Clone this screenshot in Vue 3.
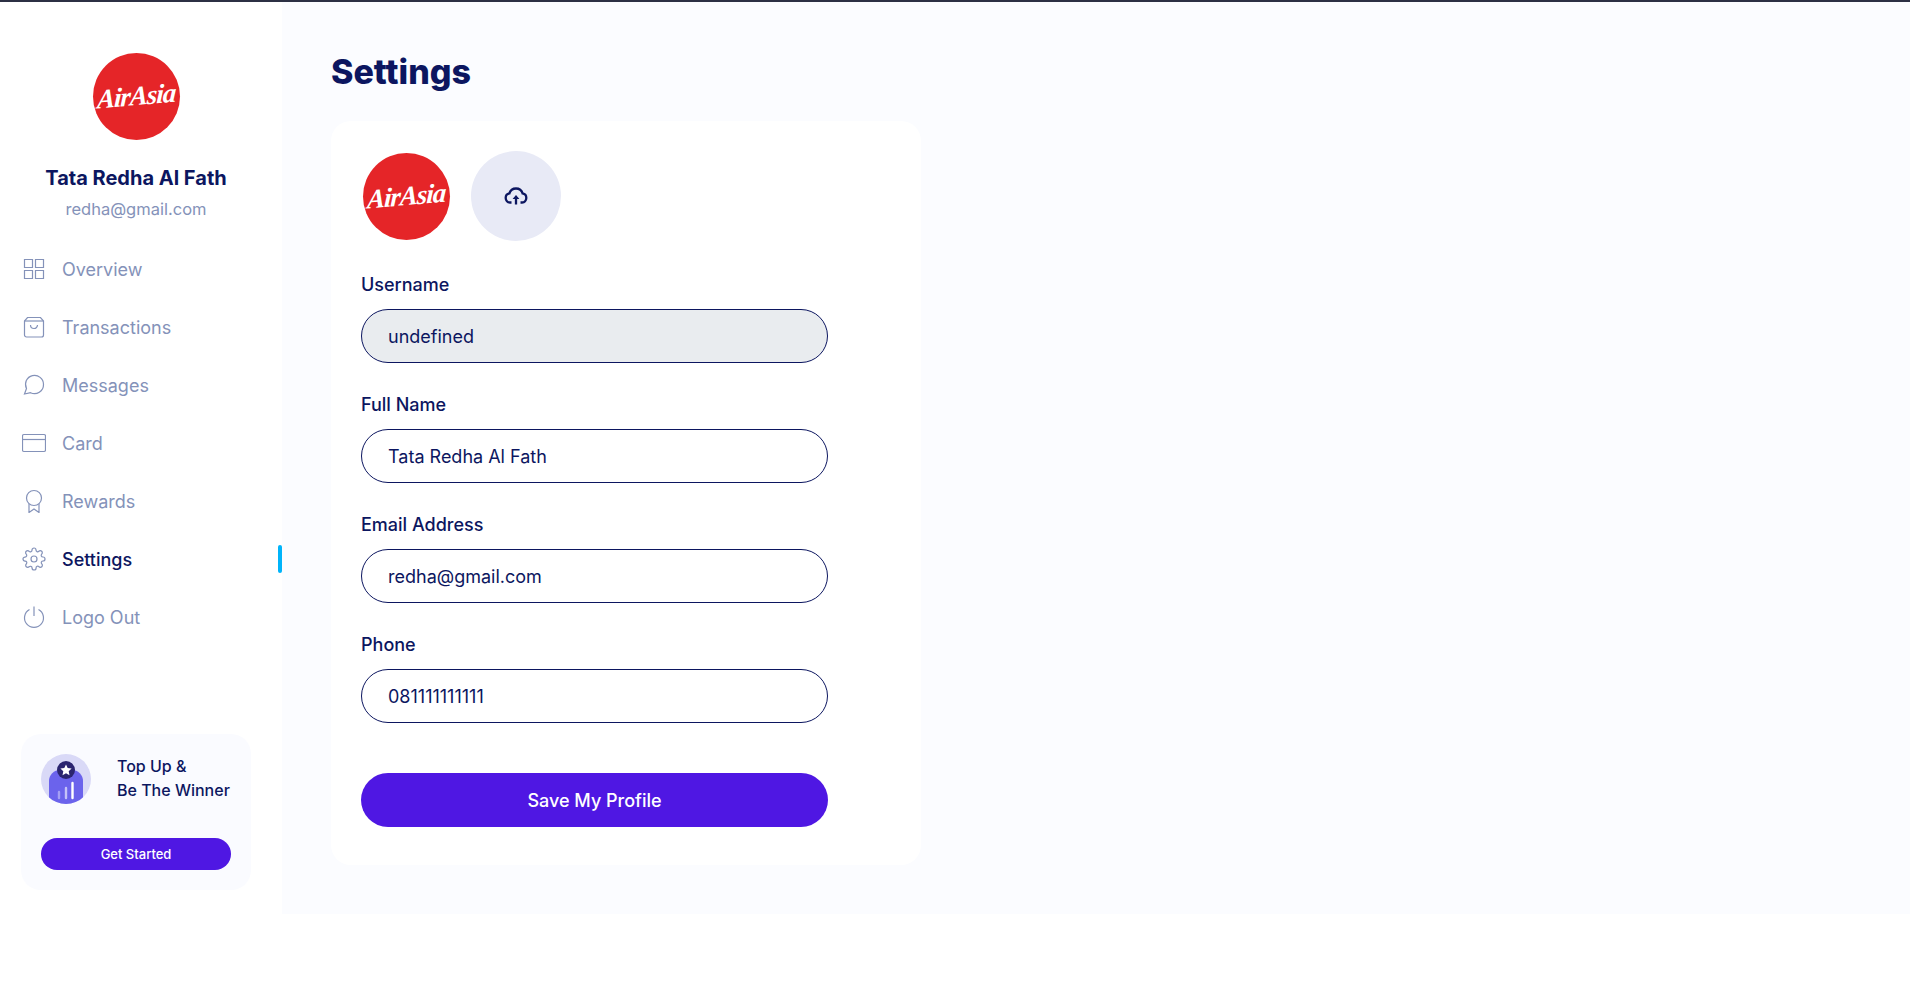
<script setup>
import { ref } from 'vue';

const navItems = [
  {
    label: 'Overview',
    paths: [
      'M2.5 2.5h8v8h-8z',
      'M13.5 2.5h8v8h-8z',
      'M2.5 13.5h8v8h-8z',
      'M13.5 13.5h8v8h-8z',
    ],
  },
  {
    label: 'Transactions',
    paths: [
      'M5.5 2.5h13l3 3.5v14a2 2 0 0 1-2 2h-15a2 2 0 0 1-2-2V6z',
      'M2.5 6h19',
      'M8.5 10a3.5 3.5 0 0 0 7 0',
    ],
  },
  {
    label: 'Messages',
    paths: ['M21.5 11.5a9 9 0 0 1-13 8.2L2.5 21l2-5.5a9 9 0 1 1 17-4z'],
  },
  {
    label: 'Card',
    paths: ['M2 3.5h20a1.5 1.5 0 0 1 1.5 1.5v14a1.5 1.5 0 0 1-1.5 1.5H2A1.5 1.5 0 0 1 .5 19V5A1.5 1.5 0 0 1 2 3.5z', 'M.5 8.5h23'],
  },
  {
    label: 'Rewards',
    paths: ['M19.5 9a7.5 7.5 0 1 1-15 0 7.5 7.5 0 0 1 15 0z', 'M7 15v8.5l5-3.5 5 3.5V15'],
  },
  {
    label: 'Settings',
    active: true,
    paths: [
      'M15 12a3 3 0 1 1-6 0 3 3 0 0 1 6 0z',
      'M19.4 15a1.65 1.65 0 0 0 .33 1.82l.06.06a2 2 0 0 1 0 2.83 2 2 0 0 1-2.83 0l-.06-.06a1.65 1.65 0 0 0-1.82-.33 1.65 1.65 0 0 0-1 1.51V21a2 2 0 0 1-2 2 2 2 0 0 1-2-2v-.09A1.65 1.65 0 0 0 9 19.4a1.65 1.65 0 0 0-1.82.33l-.06.06a2 2 0 0 1-2.83 0 2 2 0 0 1 0-2.83l.06-.06a1.65 1.65 0 0 0 .33-1.82 1.65 1.65 0 0 0-1.51-1H3a2 2 0 0 1-2-2 2 2 0 0 1 2-2h.09A1.65 1.65 0 0 0 4.6 9a1.65 1.65 0 0 0-.33-1.82l-.06-.06a2 2 0 0 1 0-2.83 2 2 0 0 1 2.83 0l.06.06a1.65 1.65 0 0 0 1.82.33H9a1.65 1.65 0 0 0 1-1.51V3a2 2 0 0 1 2-2 2 2 0 0 1 2 2v.09a1.65 1.65 0 0 0 1 1.51 1.65 1.65 0 0 0 1.82-.33l.06-.06a2 2 0 0 1 2.83 0 2 2 0 0 1 0 2.83l-.06.06a1.65 1.65 0 0 0-.33 1.82V9a1.65 1.65 0 0 0 1.51 1H21a2 2 0 0 1 2 2 2 2 0 0 1-2 2h-.09a1.65 1.65 0 0 0-1.51 1z',
    ],
  },
  {
    label: 'Logo Out',
    paths: ['M7.5 4.5a9.5 9.5 0 1 0 9 0', 'M12 1.5V11'],
  },
];

const fields = ref([
  { label: 'Username', value: 'undefined', disabled: true },
  { label: 'Full Name', value: 'Tata Redha Al Fath' },
  { label: 'Email Address', value: 'redha@gmail.com' },
  { label: 'Phone', value: '081111111111' },
]);
</script>

<template>
  <div class="topline"></div>
  <div class="page">
    <aside class="sidebar">
      <div class="logo logo-big"><span>AirAsia</span></div>
      <h2 class="name">Tata Redha Al Fath</h2>
      <p class="email">redha@gmail.com</p>

      <nav class="nav">
        <a v-for="item in navItems" :key="item.label" class="nav-item" :class="{ active: item.active }" href="#">
          <svg class="nav-icon" width="24" height="24" viewBox="0 0 24 24" fill="none">
            <path v-for="d in item.paths" :key="d" :d="d" />
          </svg>
          <span>{{ item.label }}</span>
        </a>
      </nav>

      <div class="promo">
        <div class="promo-top">
          <svg width="50" height="50" viewBox="0 0 50 50">
            <defs>
              <clipPath id="promo-clip"><circle cx="25" cy="25" r="25" /></clipPath>
            </defs>
            <circle cx="25" cy="25" r="25" fill="#d9d9f7" />
            <path d="M8 50V27a11 11 0 0 1 11-11h12a11 11 0 0 1 11 11v23z" fill="#6b63ec" clip-path="url(#promo-clip)" />
            <circle cx="25" cy="16" r="9" fill="#2b2570" />
            <path d="M25 10.5l1.7 3.6 3.9.5-2.9 2.7.8 3.9-3.5-2-3.5 2 .8-3.9-2.9-2.7 3.9-.5z" fill="#fff" />
            <path d="M18 44v-6" stroke="#a5a0f4" stroke-width="2.4" stroke-linecap="round" />
            <path d="M25 44V34" stroke="#c5c2f8" stroke-width="2.4" stroke-linecap="round" />
            <path d="M31.5 44V29" stroke="#fff" stroke-width="2.4" stroke-linecap="round" />
          </svg>
          <p class="promo-text">Top Up &amp;<br />Be The Winner</p>
        </div>
        <button class="promo-btn" type="button">Get Started</button>
      </div>
    </aside>

    <main class="main">
      <h1 class="title">Settings</h1>
      <section class="card">
        <div class="avatar-row">
          <div class="logo logo-big"><span>AirAsia</span></div>
          <div class="upload">
            <svg width="24" height="18" viewBox="0 0 24 18" fill="none" stroke="#0c1660" stroke-width="2.3">
              <path d="M7.5 15.5H6A4.6 4.6 0 0 1 5.4 6.4 6.9 6.9 0 0 1 18.6 6.4 4.6 4.6 0 0 1 18 15.5h-1.5" />
              <path d="M12 17.5v-6" />
              <path d="M12 8l3.4 4H8.6z" fill="#0c1660" stroke="none" />
            </svg>
          </div>
        </div>

        <div v-for="field in fields" :key="field.label" class="field">
          <label class="field-label">{{ field.label }}</label>
          <input class="field-input" type="text" :value="field.value" :disabled="field.disabled" />
        </div>

        <button class="save-btn" type="button">Save My Profile</button>
      </section>
    </main>
  </div>
</template>

<style scoped>
.topline {
  height: 2px;
  background-color: #2c3044;
}
.page {
  display: flex;
  min-height: 912px;
  font-family: Inter, "Open Sans", sans-serif;
  color: #0c1660;
}

.sidebar {
  width: 282px;
  flex-shrink: 0;
  display: flex;
  flex-direction: column;
  align-items: center;
  padding: 51px 10px 0 0;
  box-sizing: border-box;
  background-color: #fff;
}
.logo {
  display: flex;
  align-items: center;
  justify-content: center;
  flex-shrink: 0;
  border-radius: 50%;
  background-color: #e52528;
  color: #fff;
  overflow: hidden;
}
.logo-big {
  width: 87px;
  height: 87px;
}
.logo span {
  font-family: "Liberation Serif", serif;
  font-style: italic;
  font-weight: 700;
  font-size: 27px;
  letter-spacing: -1px;
  transform: rotate(-5deg) skewX(-8deg);
}
.name {
  margin: 23px 0 0;
  font-size: 20px;
  line-height: 30px;
  font-weight: 700;
  letter-spacing: 0;
}
.email {
  margin: 4px 0 0;
  font-size: 16.5px;
  line-height: 24px;
  color: #8492b9;
}

.nav {
  width: 282px;
  margin: 28px -10px 0 0;
  display: flex;
  flex-direction: column;
  gap: 18px;
}
.nav-item {
  position: relative;
  height: 40px;
  display: flex;
  align-items: center;
  gap: 16px;
  padding-left: 22px;
  font-size: 18px;
  color: #8492b9;
  text-decoration: none;
}
.nav-icon {
  stroke: #8492b9;
  stroke-width: 1.2;
}
.nav-item.active {
  color: #0c1660;
  font-weight: 500;
}
.nav-item.active::after {
  content: "";
  position: absolute;
  right: 0;
  top: 6px;
  width: 4px;
  height: 28px;
  border-radius: 2px;
  background-color: #00b4fa;
}

.promo {
  width: 230px;
  height: 156px;
  margin-top: 97px;
  padding: 20px;
  box-sizing: border-box;
  border-radius: 20px;
  background-color: #fafbff;
}
.promo-top {
  display: flex;
  gap: 26px;
}
.promo-text {
  margin: 0;
  font-size: 16px;
  line-height: 24px;
  font-weight: 500;
}
.promo-btn {
  display: block;
  width: 190px;
  height: 32px;
  margin-top: 34px;
  border: none;
  border-radius: 16px;
  background-color: #4f17e3;
  color: #fff;
  font-family: inherit;
  font-size: 13px;
  font-weight: 500;
}

.main {
  flex: 1;
  padding: 0 49px;
  background-color: #fbfcff;
}
.title {
  margin: 47px 0 0;
  font-size: 34px;
  line-height: 46px;
  font-weight: 800;
}
.card {
  width: 590px;
  height: 744px;
  margin-top: 26px;
  padding: 30px 30px 0;
  box-sizing: border-box;
  border-radius: 20px;
  background-color: #fff;
}
.avatar-row {
  display: flex;
  align-items: center;
  gap: 21px;
  padding-left: 2px;
}
.upload {
  width: 90px;
  height: 90px;
  display: flex;
  align-items: center;
  justify-content: center;
  border-radius: 50%;
  background-color: #e8eaf6;
}
.field {
  width: 467px;
  margin-top: 28px;
}
.avatar-row + .field {
  margin-top: 30px;
}
.field-label {
  display: block;
  margin-bottom: 11px;
  font-size: 18px;
  line-height: 27px;
  font-weight: 500;
}
.field-input {
  display: block;
  width: 100%;
  height: 54px;
  padding: 0 26px;
  box-sizing: border-box;
  border: 1px solid #0c1660;
  border-radius: 27px;
  background-color: #fff;
  color: #0c1660;
  font-family: inherit;
  font-size: 18px;
  outline: none;
}
.field-input:disabled {
  background-color: #e9ecef;
  opacity: 1;
  -webkit-text-fill-color: #0c1660;
}
.save-btn {
  display: block;
  width: 467px;
  height: 54px;
  margin-top: 50px;
  border: none;
  border-radius: 27px;
  background-color: #4f17e3;
  color: #fff;
  font-family: inherit;
  font-size: 18px;
  font-weight: 500;
}
</style>
